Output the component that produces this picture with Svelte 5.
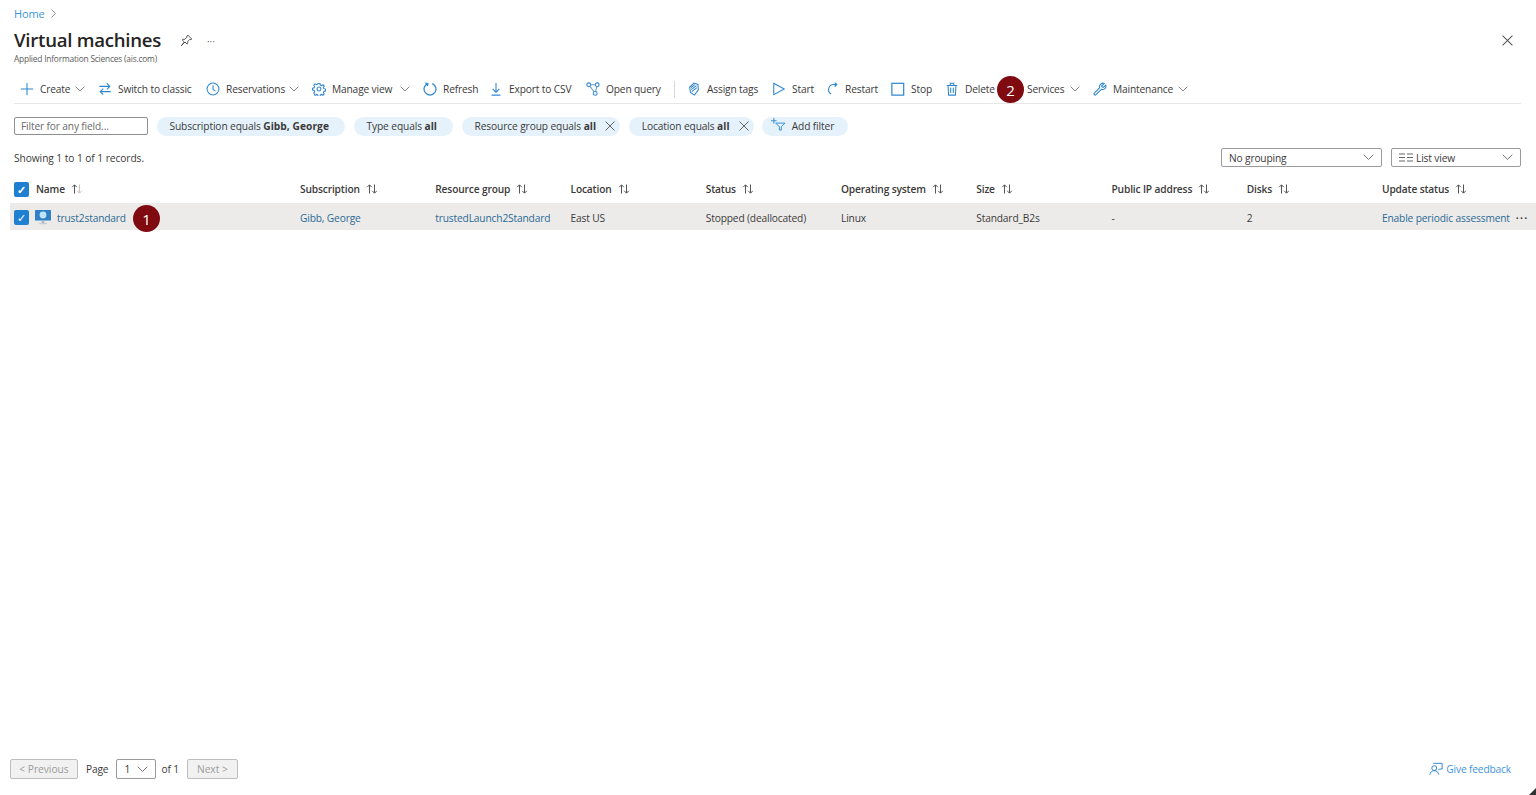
<script>
  const toolbar = [
    { icon: 'plus', label: 'Create', chevron: true, width: 78 },
    { icon: 'swap', label: 'Switch to classic', width: 108 },
    { icon: 'clock', label: 'Reservations', chevron: true, width: 106 },
    { icon: 'gear', label: 'Manage view', chevron: true, width: 111 },
    { icon: 'refresh', label: 'Refresh', width: 66 },
    { icon: 'down', label: 'Export to CSV', width: 97 },
    { icon: 'query', label: 'Open query', width: 88, divider: true },
    { icon: 'tag', label: 'Assign tags', width: 85 },
    { icon: 'play', label: 'Start', width: 53 },
    { icon: 'restart', label: 'Restart', width: 66 },
    { icon: 'stop', label: 'Stop', width: 54 },
    { icon: 'trash', label: 'Delete', width: 62 },
    { icon: 'gear', label: 'Services', chevron: true, width: 86 },
    { icon: 'wrench', label: 'Maintenance', chevron: true, width: 108 }
  ];

  const filters = [
    { text: 'Subscription equals ', value: 'Gibb, George' },
    { text: 'Type equals ', value: 'all' },
    { text: 'Resource group equals ', value: 'all', close: true },
    { text: 'Location equals ', value: 'all', close: true }
  ];

  const columns = ['Subscription', 'Resource group', 'Location', 'Status', 'Operating system', 'Size', 'Public IP address', 'Disks', 'Update status'];
</script>

{#snippet sortArrows(faded)}
  <svg class="sort" viewBox="0 0 12 10" width="12" height="10" fill="none" stroke-width="1">
    <path d="M3.5 9.5V1M1.2 3.2 3.5.8l2.3 2.4" stroke="#555" />
    <path d="M8.5.5V9M6.2 6.8 8.5 9.2l2.3-2.4" stroke={faded ? '#c4c4c4' : '#555'} />
  </svg>
{/snippet}

{#snippet chevron(w)}
  <svg class="chev" viewBox="0 0 12 7" width={w} height={w * 0.58} fill="none" stroke="#666" stroke-width="1">
    <path d="M.8.8 6 6l5.2-5.2" />
  </svg>
{/snippet}

{#snippet toolIcon(name)}
  <svg class="tool" viewBox="0 0 16 16" width="16" height="16" fill="none" stroke="#2f86d0" stroke-width="1.2">
    {#if name === 'plus'}
      <path d="M8 1v14M1 8h14" />
    {:else if name === 'swap'}
      <path d="M1.5 5h12M10 1.5 13.5 5 10 8.5M14.5 11h-12M6 7.5 2.5 11 6 14.5" />
    {:else if name === 'clock'}
      <circle cx="8" cy="8" r="6.8" /><path d="M8 3.8v4.6l2.8 1.7" />
    {:else if name === 'gear'}
      <circle cx="8" cy="8" r="2.2" />
      <path d="M6.9 1.6h2.2l.4 1.9 1.3.6 1.7-1 1.5 1.6-1 1.6.5 1.3 1.9.5v2.2l-1.9.4-.5 1.3 1 1.7-1.5 1.5-1.7-1-1.3.5-.4 1.9H6.9l-.4-1.9-1.3-.5-1.7 1L2 12.7l1-1.7-.5-1.3-1.9-.4V7.1l1.9-.5.5-1.3-1-1.6 1.5-1.6 1.7 1 1.3-.6z" />
    {:else if name === 'refresh'}
      <path d="M10.6 1.8a6.8 6.8 0 1 1-5.2 0M2.6 1.2 5.6 1.7 5 4.6" stroke-width="1.4" />
    {:else if name === 'down'}
      <path d="M8 1v10.5M4.2 7.8 8 11.6l3.8-3.8M3 15h10" />
    {:else if name === 'query'}
      <circle cx="3.2" cy="3.2" r="2.2" /><circle cx="12.8" cy="3.2" r="2.2" /><circle cx="10.5" cy="13" r="2.2" />
      <path d="M5.4 3.2h5.2M4.6 5 9.2 11.2M11 10.8l1.3-5.4" stroke="#6a9dc4" />
    {:else if name === 'tag'}
      <path d="M3 6 8 1.2l4.5 1.6.5 6.2-4.5 6-4.5-3z" /><path d="M4.5 6.5 9 3M4.8 8.8l6-4.6M5.5 11l5.8-4.5" />
    {:else if name === 'play'}
      <path d="M2 1.5 14 8 2 14.5z" />
    {:else if name === 'restart'}
      <path d="M13.5 3H10.5A5.8 5.8 0 0 0 7 13.8M11 .6 13.6 3 11 5.6" />
    {:else if name === 'stop'}
      <rect x="1" y="1.5" width="13.5" height="13.5" stroke-width="1.4" />
    {:else if name === 'trash'}
      <path d="M3.5 4h9l-.6 11H4.1zM2 4h12M6 4V1.5h4V4M6.5 6.5v6M9.5 6.5v6" />
    {:else if name === 'wrench'}
      <path d="M14.6 3.5 11.5 6.4 9.8 4.6l3-3a3.9 3.9 0 0 0-5.1 4.8L1.5 12.6a1.3 1.3 0 0 0 1.9 1.9l6.2-6.1a3.9 3.9 0 0 0 5-4.9z" />
    {/if}
  </svg>
{/snippet}

<div class="page">
  <nav class="crumbs">
    <a href="#home">Home</a>
    <svg class="gt" viewBox="0 0 5 9" width="5" height="9" fill="none" stroke="#8a8a8a"><path d="M.6.6 4.4 4.5.6 8.4" /></svg>
  </nav>

  <header class="title-row">
    <h1>Virtual machines</h1>
    <svg class="pin" viewBox="0 0 16 16" width="13" height="13" fill="none" stroke="#444" stroke-width="1.1">
      <path d="M9.8 1.5 14.5 6.2l-1 .6-1.4-.3-2.6 2.6.1 2.4-.9.9-2.5-2.5L1.5 14.5l3.8-4.7-2.6-2.5.9-.9 2.4.1 2.6-2.6-.3-1.4z" />
    </svg>
    <span class="more">···</span>
    <svg class="close" viewBox="0 0 12 12" width="11" height="11" fill="none" stroke="#555" stroke-width="1.1">
      <path d="M.6.6l10.8 10.8M11.4.6.6 11.4" />
    </svg>
  </header>
  <p class="tenant">Applied Information Sciences (ais.com)</p>

  <div class="toolbar">
    {#each toolbar as item}
      <button class="tool-btn" style="width: {item.width}px">
        {@render toolIcon(item.icon)}
        <span>{item.label}</span>
        {#if item.chevron}{@render chevron(10)}{/if}
      </button>
      {#if item.divider}<span class="divider"></span>{/if}
    {/each}
    <span class="badge badge-two">2</span>
  </div>

  <div class="filters">
    <input class="search" placeholder="Filter for any field..." />
    {#each filters as f}
      <span class="pill" class:closable={f.close}>
        {f.text}<b>{f.value}</b>
        {#if f.close}
          <svg viewBox="0 0 10 10" width="10" height="10" fill="none" stroke="#555" stroke-width=".9"><path d="M.5.5l9 9M9.5.5l-9 9" /></svg>
        {/if}
      </span>
    {/each}
    <span class="pill add">
      <svg viewBox="0 0 16 14" width="15" height="13" fill="none" stroke="#2f86d0" stroke-width="1">
        <path d="M3 0v6M0 3h6M5 5.5h10L11 9.5V13H9V9.5z" />
      </svg>
      Add filter
    </span>
  </div>

  <div class="info-row">
    <span class="records">Showing 1 to 1 of 1 records.</span>
    <div class="selects">
      <div class="select grouping"><span>No grouping</span>{@render chevron(11)}</div>
      <div class="select view">
        <span class="view-label">
          <svg viewBox="0 0 14 9" width="14" height="9" fill="none" stroke="#666" stroke-width="1"><path d="M0 1h6M8 1h6M0 4.5h6M8 4.5h6M0 8h6M8 8h6" /></svg>
          List view
        </span>
        {@render chevron(11)}
      </div>
    </div>
  </div>

  <div class="grid head">
    <div class="name-cell">
      <span class="check">✓</span>
      <span class="name-head">Name</span>
      {@render sortArrows(true)}
    </div>
    {#each columns as col}
      <div class="th">{col}{@render sortArrows(false)}</div>
    {/each}
  </div>

  <div class="grid row">
    <div class="name-cell">
      <span class="check">✓</span>
      <svg class="vm" viewBox="0 0 16 15" width="16" height="15">
        <rect x="0" y="0" width="16" height="10.5" rx=".6" fill="#2f80c8" />
        <circle cx="8" cy="5" r="3.4" fill="#bfe6f7" />
        <rect x="6.7" y="10.5" width="2.6" height="2.4" fill="#a9b4bc" />
        <rect x="4.2" y="12.9" width="7.6" height="1.4" fill="#c5ccd1" />
      </svg>
      <a href="#vm">trust2standard</a>
      <span class="badge">1</span>
    </div>
    <a href="#sub">Gibb, George</a>
    <a href="#rg">trustedLaunch2Standard</a>
    <div>East US</div>
    <div>Stopped (deallocated)</div>
    <div>Linux</div>
    <div>Standard_B2s</div>
    <div>-</div>
    <div>2</div>
    <div class="last"><a href="#update">Enable periodic assessment</a><span class="row-more">•••</span></div>
  </div>

  <footer>
    <div class="pager">
      <button class="page-btn">&lt; Previous</button>
      <span>Page</span>
      <div class="select page-select"><span>1</span>{@render chevron(11)}</div>
      <span class="of">of 1</span>
      <button class="page-btn next">Next &gt;</button>
    </div>
    <a class="feedback" href="#feedback">
      <svg viewBox="0 0 16 15" width="14" height="14" fill="none" stroke="#2f86d0" stroke-width="1.1">
        <circle cx="6" cy="6.5" r="2.8" /><path d="M1 14c.4-3 2.4-4.6 5-4.6s4.6 1.6 5 4.6M5 1h10v6.5h-3l-1.5 1.5" />
      </svg>
      Give feedback
    </a>
  </footer>
  <span class="corner"></span>
</div>

<style>
  :global(body) {
    margin: 0;
    background: #fff;
  }

  .page {
    position: relative;
    height: 795px;
    overflow: hidden;
    display: flex;
    flex-direction: column;
    font-family: "Open Sans", "Noto Sans", sans-serif;
    font-size: 10.2px;
    letter-spacing: -0.15px;
    color: #3b3a39;
  }

  a {
    color: #2b6a94;
    text-decoration: none;
  }

  .crumbs {
    margin: 6px 0 0 14px;
    height: 14px;
    display: flex;
    align-items: center;
    font-size: 11px;
  }

  .crumbs a {
    color: #3f94dc;
  }

  .gt {
    margin-left: 6px;
  }

  .title-row {
    margin: 7px 23px 0 14px;
    height: 24px;
    display: flex;
    align-items: center;
  }

  h1 {
    margin: 0;
    font-size: 18.6px;
    font-weight: 600;
    letter-spacing: -0.25px;
    color: #252423;
  }

  .pin {
    margin: 3px 0 0 19px;
  }

  .more {
    margin: 3px 0 0 14px;
    color: #777;
  }

  .close {
    margin: 3px 0 0 auto;
  }

  .tenant {
    margin: 1px 0 0 14px;
    height: 14px;
    line-height: 14px;
    font-size: 8.4px;
    letter-spacing: -0.2px;
    color: #5c5b5a;
  }

  .toolbar {
    position: relative;
    margin: 9px 15px 0 14px;
    height: 29px;
    padding-left: 6px;
    display: flex;
    align-items: center;
    border-bottom: 1.5px solid #e6e6e6;
    box-sizing: border-box;
  }

  .tool-btn {
    padding: 0;
    border: 0;
    background: none;
    font: inherit;
    letter-spacing: inherit;
    color: inherit;
    display: flex;
    align-items: center;
    flex: none;
    white-space: nowrap;
  }

  .tool {
    width: 14px;
    height: 14px;
    margin-right: 6px;
    flex: none;
  }

  .tool-btn .chev {
    margin-left: auto;
    margin-right: 13px;
  }

  .divider {
    width: 1px;
    height: 17px;
    margin-right: 12px;
    background: #d8d8d8;
    flex: none;
  }

  .badge {
    width: 27px;
    height: 27px;
    border-radius: 50%;
    background: #7f0a0f;
    color: #fff;
    font-size: 15px;
    letter-spacing: 0;
    display: flex;
    align-items: center;
    justify-content: center;
    flex: none;
  }

  .badge-two {
    position: absolute;
    left: 983px;
    top: 1px;
  }

  .filters {
    margin: 12px 0 0 14px;
    height: 20px;
    display: flex;
    align-items: center;
    gap: 8.5px;
  }

  .search {
    width: 134px;
    height: 18px;
    box-sizing: border-box;
    border: 1px solid #8f8f8f;
    border-radius: 2px;
    padding: 0 6px;
    font: inherit;
    letter-spacing: inherit;
  }

  .search::placeholder {
    color: #6b6b6b;
    opacity: 1;
  }

  .pill {
    height: 19px;
    padding: 0 16px 0 13px;
    border-radius: 10px;
    background: #e6f2fb;
    display: flex;
    align-items: center;
    gap: 3px;
    white-space: pre;
    letter-spacing: -0.11px;
    color: #3b3a39;
  }

  .pill b {
    font-weight: 700;
    letter-spacing: 0.06px;
    margin-left: -3px;
  }

  .pill svg {
    margin-left: 6px;
  }

  .pill.closable {
    padding-right: 5px;
  }

  .pill.add {
    padding: 0 14px 0 9px;
  }

  .pill.add svg {
    margin: -3px 0 0 0;
  }

  .info-row {
    margin: 11px 15px 0 14px;
    height: 21px;
    display: flex;
    align-items: center;
    justify-content: space-between;
  }

  .records {
    letter-spacing: -0.06px;
  }

  .selects {
    display: flex;
    gap: 9px;
  }

  .select {
    height: 19px;
    box-sizing: border-box;
    border: 1px solid #9a9a9a;
    border-radius: 2px;
    padding: 0 7px;
    display: flex;
    align-items: center;
    justify-content: space-between;
    background: #fff;
  }

  .grouping {
    width: 161px;
  }

  .view {
    width: 130px;
  }

  .view-label {
    display: flex;
    align-items: center;
    gap: 3px;
  }

  .grid {
    margin-left: 10px;
    display: grid;
    grid-template-columns: 290px repeat(8, 135.25px) 1fr;
    align-items: center;
  }

  .head {
    margin-top: 8px;
    height: 26px;
    font-weight: 600;
  }

  .th {
    display: flex;
    align-items: center;
    gap: 6px;
  }

  .sort {
    flex: none;
  }

  .row {
    margin-top: 1px;
    height: 27px;
    background: #ecebea;
  }

  .name-cell {
    display: flex;
    align-items: center;
    padding-left: 4px;
  }

  .name-head {
    margin-left: 7px;
    margin-right: 6px;
  }

  .check {
    width: 15px;
    height: 15px;
    border-radius: 2px;
    background: #1f7fd1;
    color: #fff;
    font-size: 11px;
    line-height: 15px;
    text-align: center;
    flex: none;
  }

  .vm {
    margin-left: 6px;
    margin-right: 6px;
    flex: none;
  }

  .row .badge {
    margin-left: 7px;
    margin-top: 2px;
  }

  .last {
    display: flex;
    align-items: center;
    white-space: nowrap;
  }

  .row-more {
    margin-left: 6px;
    font-size: 8px;
    letter-spacing: 1.2px;
    color: #444;
  }

  footer {
    margin: auto 25px 16px 10px;
    display: flex;
    align-items: center;
    justify-content: space-between;
  }

  .pager {
    display: flex;
    align-items: center;
    gap: 8px;
  }

  .of {
    margin-left: -3px;
  }

  .page-btn {
    width: 68px;
    height: 20px;
    padding: 0;
    border: 1.5px solid #bdbdbd;
    border-radius: 2px;
    background: #f1f1f1;
    color: #9b9b9b;
    font: inherit;
    letter-spacing: 0;
  }

  .page-btn.next {
    width: 51px;
  }

  .page-select {
    width: 40px;
    height: 20px;
  }

  .feedback {
    display: flex;
    align-items: center;
    gap: 3px;
    color: #3f94dc;
  }

  .corner {
    position: absolute;
    right: 0;
    bottom: 0;
    width: 0;
    height: 0;
    border-left: 7px solid transparent;
    border-bottom: 7px solid #333;
  }
</style>
